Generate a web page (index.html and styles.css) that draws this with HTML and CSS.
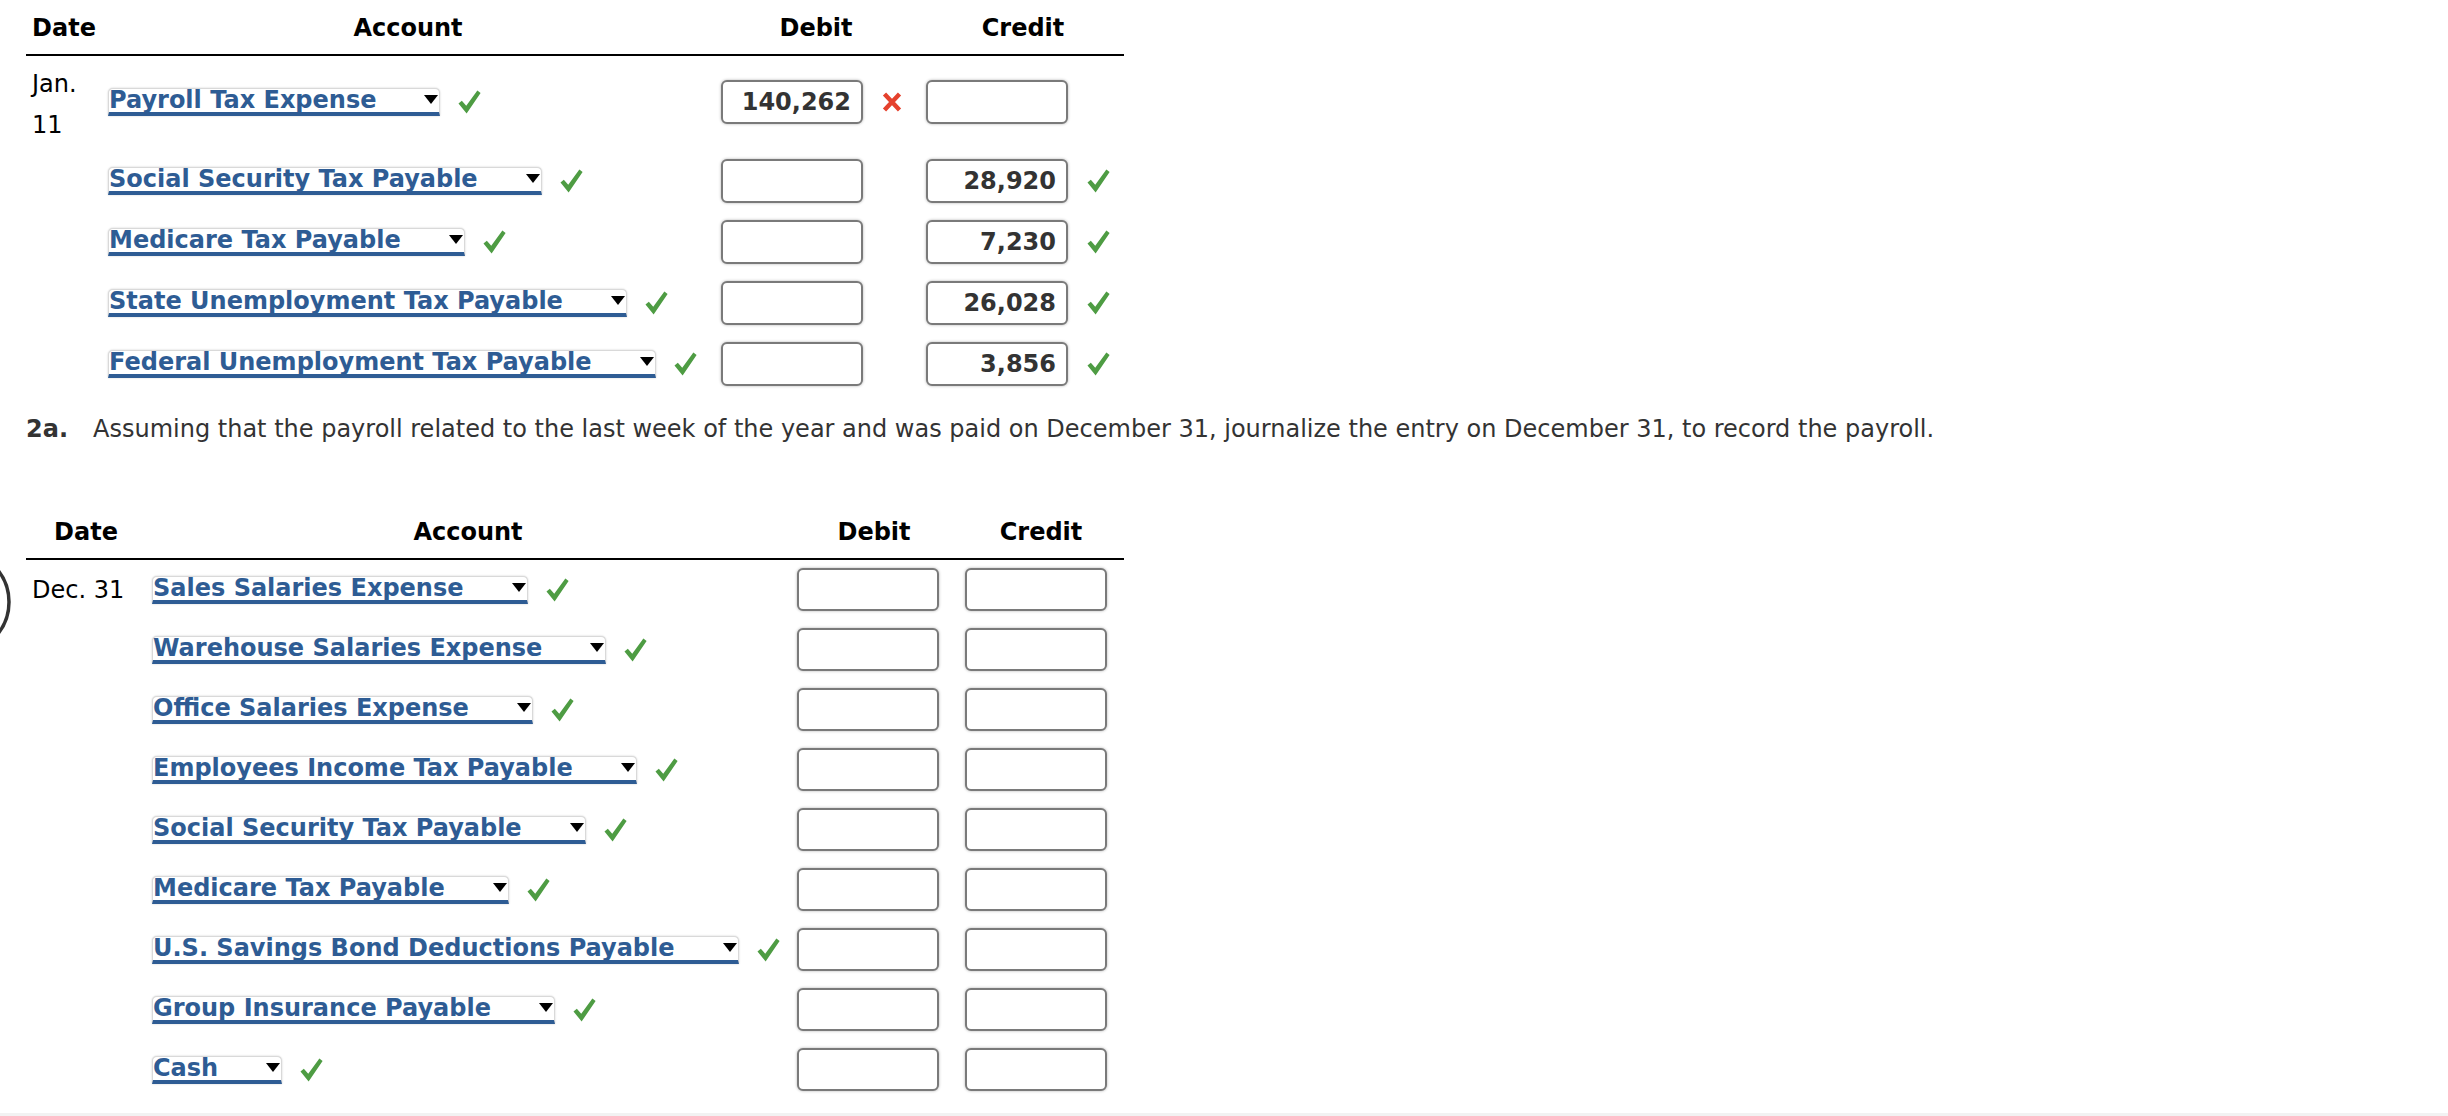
FILE: index.html
```html
<!DOCTYPE html>
<html lang="en">
<head>
<meta charset="utf-8">
<title>Journal entries</title>
<link rel="stylesheet" href="styles.css">
</head>
<body>
<div class="page">
  <svg class="edge-circle" width="12" height="66" viewBox="0 0 12 66" aria-hidden="true"><circle cx="-42" cy="33" r="51" fill="none" stroke="#333" stroke-width="3.5"/></svg>

  <section class="journal j1">
    <div class="jrow head">
      <div class="h-date">Date</div>
      <div class="h-acct">Account</div>
      <div class="h-debit">Debit</div>
      <div class="h-credit">Credit</div>
    </div>

    <div class="jrow first">
      <div class="c-date">Jan.<br>11</div>
      <div class="c-acct"><span class="dd"><span class="dd-text">Payroll Tax Expense</span><span class="arrow"></span></span><svg class="ok" viewBox="0 0 24 25"><path d="M0.5 14 L4 11.2 L8.6 16.4 L20.2 0.5 L23.6 3.2 L9 24.5 Z"/></svg></div>
      <div class="c-debit"><input class="amt" type="text" value="140,262" readonly><svg class="bad" viewBox="0 0 20 20"><path d="M2.5 2 L17.5 18 M17.5 2 L2.5 18"/></svg></div>
      <div class="c-credit"><input class="amt" type="text" value="" readonly></div>
    </div>

    <div class="jrow line">
      <div class="c-date"></div>
      <div class="c-acct"><span class="dd"><span class="dd-text">Social Security Tax Payable</span><span class="arrow"></span></span><svg class="ok" viewBox="0 0 24 25"><path d="M0.5 14 L4 11.2 L8.6 16.4 L20.2 0.5 L23.6 3.2 L9 24.5 Z"/></svg></div>
      <div class="c-debit"><input class="amt" type="text" value="" readonly></div>
      <div class="c-credit"><input class="amt" type="text" value="28,920" readonly><svg class="ok" viewBox="0 0 24 25"><path d="M0.5 14 L4 11.2 L8.6 16.4 L20.2 0.5 L23.6 3.2 L9 24.5 Z"/></svg></div>
    </div>

    <div class="jrow line">
      <div class="c-date"></div>
      <div class="c-acct"><span class="dd"><span class="dd-text">Medicare Tax Payable</span><span class="arrow"></span></span><svg class="ok" viewBox="0 0 24 25"><path d="M0.5 14 L4 11.2 L8.6 16.4 L20.2 0.5 L23.6 3.2 L9 24.5 Z"/></svg></div>
      <div class="c-debit"><input class="amt" type="text" value="" readonly></div>
      <div class="c-credit"><input class="amt" type="text" value="7,230" readonly><svg class="ok" viewBox="0 0 24 25"><path d="M0.5 14 L4 11.2 L8.6 16.4 L20.2 0.5 L23.6 3.2 L9 24.5 Z"/></svg></div>
    </div>

    <div class="jrow line">
      <div class="c-date"></div>
      <div class="c-acct"><span class="dd"><span class="dd-text">State Unemployment Tax Payable</span><span class="arrow"></span></span><svg class="ok" viewBox="0 0 24 25"><path d="M0.5 14 L4 11.2 L8.6 16.4 L20.2 0.5 L23.6 3.2 L9 24.5 Z"/></svg></div>
      <div class="c-debit"><input class="amt" type="text" value="" readonly></div>
      <div class="c-credit"><input class="amt" type="text" value="26,028" readonly><svg class="ok" viewBox="0 0 24 25"><path d="M0.5 14 L4 11.2 L8.6 16.4 L20.2 0.5 L23.6 3.2 L9 24.5 Z"/></svg></div>
    </div>

    <div class="jrow line">
      <div class="c-date"></div>
      <div class="c-acct"><span class="dd"><span class="dd-text">Federal Unemployment Tax Payable</span><span class="arrow"></span></span><svg class="ok" viewBox="0 0 24 25"><path d="M0.5 14 L4 11.2 L8.6 16.4 L20.2 0.5 L23.6 3.2 L9 24.5 Z"/></svg></div>
      <div class="c-debit"><input class="amt" type="text" value="" readonly></div>
      <div class="c-credit"><input class="amt" type="text" value="3,856" readonly><svg class="ok" viewBox="0 0 24 25"><path d="M0.5 14 L4 11.2 L8.6 16.4 L20.2 0.5 L23.6 3.2 L9 24.5 Z"/></svg></div>
    </div>
  </section>

  <p class="q"><b class="q-num">2a.</b><span>Assuming that the payroll related to the last week of the year and was paid on December 31, journalize the entry on December 31, to record the payroll.</span></p>

  <section class="journal j2">
    <div class="jrow head">
      <div class="h-date">Date</div>
      <div class="h-acct">Account</div>
      <div class="h-debit">Debit</div>
      <div class="h-credit">Credit</div>
    </div>

    <div class="jrow line firstline">
      <div class="c-date">Dec. 31</div>
      <div class="c-acct"><span class="dd"><span class="dd-text">Sales Salaries Expense</span><span class="arrow"></span></span><svg class="ok" viewBox="0 0 24 25"><path d="M0.5 14 L4 11.2 L8.6 16.4 L20.2 0.5 L23.6 3.2 L9 24.5 Z"/></svg></div>
      <div class="c-debit"><input class="amt" type="text" value="" readonly></div>
      <div class="c-credit"><input class="amt" type="text" value="" readonly></div>
    </div>

    <div class="jrow line">
      <div class="c-date"></div>
      <div class="c-acct"><span class="dd"><span class="dd-text">Warehouse Salaries Expense</span><span class="arrow"></span></span><svg class="ok" viewBox="0 0 24 25"><path d="M0.5 14 L4 11.2 L8.6 16.4 L20.2 0.5 L23.6 3.2 L9 24.5 Z"/></svg></div>
      <div class="c-debit"><input class="amt" type="text" value="" readonly></div>
      <div class="c-credit"><input class="amt" type="text" value="" readonly></div>
    </div>

    <div class="jrow line">
      <div class="c-date"></div>
      <div class="c-acct"><span class="dd"><span class="dd-text">Office Salaries Expense</span><span class="arrow"></span></span><svg class="ok" viewBox="0 0 24 25"><path d="M0.5 14 L4 11.2 L8.6 16.4 L20.2 0.5 L23.6 3.2 L9 24.5 Z"/></svg></div>
      <div class="c-debit"><input class="amt" type="text" value="" readonly></div>
      <div class="c-credit"><input class="amt" type="text" value="" readonly></div>
    </div>

    <div class="jrow line">
      <div class="c-date"></div>
      <div class="c-acct"><span class="dd"><span class="dd-text">Employees Income Tax Payable</span><span class="arrow"></span></span><svg class="ok" viewBox="0 0 24 25"><path d="M0.5 14 L4 11.2 L8.6 16.4 L20.2 0.5 L23.6 3.2 L9 24.5 Z"/></svg></div>
      <div class="c-debit"><input class="amt" type="text" value="" readonly></div>
      <div class="c-credit"><input class="amt" type="text" value="" readonly></div>
    </div>

    <div class="jrow line">
      <div class="c-date"></div>
      <div class="c-acct"><span class="dd"><span class="dd-text">Social Security Tax Payable</span><span class="arrow"></span></span><svg class="ok" viewBox="0 0 24 25"><path d="M0.5 14 L4 11.2 L8.6 16.4 L20.2 0.5 L23.6 3.2 L9 24.5 Z"/></svg></div>
      <div class="c-debit"><input class="amt" type="text" value="" readonly></div>
      <div class="c-credit"><input class="amt" type="text" value="" readonly></div>
    </div>

    <div class="jrow line">
      <div class="c-date"></div>
      <div class="c-acct"><span class="dd"><span class="dd-text">Medicare Tax Payable</span><span class="arrow"></span></span><svg class="ok" viewBox="0 0 24 25"><path d="M0.5 14 L4 11.2 L8.6 16.4 L20.2 0.5 L23.6 3.2 L9 24.5 Z"/></svg></div>
      <div class="c-debit"><input class="amt" type="text" value="" readonly></div>
      <div class="c-credit"><input class="amt" type="text" value="" readonly></div>
    </div>

    <div class="jrow line">
      <div class="c-date"></div>
      <div class="c-acct"><span class="dd"><span class="dd-text">U.S. Savings Bond Deductions Payable</span><span class="arrow"></span></span><svg class="ok" viewBox="0 0 24 25"><path d="M0.5 14 L4 11.2 L8.6 16.4 L20.2 0.5 L23.6 3.2 L9 24.5 Z"/></svg></div>
      <div class="c-debit"><input class="amt" type="text" value="" readonly></div>
      <div class="c-credit"><input class="amt" type="text" value="" readonly></div>
    </div>

    <div class="jrow line">
      <div class="c-date"></div>
      <div class="c-acct"><span class="dd"><span class="dd-text">Group Insurance Payable</span><span class="arrow"></span></span><svg class="ok" viewBox="0 0 24 25"><path d="M0.5 14 L4 11.2 L8.6 16.4 L20.2 0.5 L23.6 3.2 L9 24.5 Z"/></svg></div>
      <div class="c-debit"><input class="amt" type="text" value="" readonly></div>
      <div class="c-credit"><input class="amt" type="text" value="" readonly></div>
    </div>

    <div class="jrow line">
      <div class="c-date"></div>
      <div class="c-acct"><span class="dd"><span class="dd-text">Cash</span><span class="arrow"></span></span><svg class="ok" viewBox="0 0 24 25"><path d="M0.5 14 L4 11.2 L8.6 16.4 L20.2 0.5 L23.6 3.2 L9 24.5 Z"/></svg></div>
      <div class="c-debit"><input class="amt" type="text" value="" readonly></div>
      <div class="c-credit"><input class="amt" type="text" value="" readonly></div>
    </div>
  </section>
</div>
</body>
</html>
```

FILE: styles.css
```css
html, body {
  margin: 0;
  padding: 0;
  background: #fff;
}

body {
  font-family: "DejaVu Sans", Verdana, sans-serif;
  font-size: 24px;
  color: #000;
}

.page {
  position: relative;
  box-sizing: border-box;
  min-height: 1116px;
  padding: 0 0 0 26px;
  border-bottom: 3px solid #f2f2f2;
}

.edge-circle {
  position: absolute;
  left: 0;
  top: 569px;
}

.journal {
  width: 1098px;
}

.jrow {
  display: grid;
  align-items: center;
}

.j1 .jrow {
  grid-template-columns: 82px 613px 205px 198px;
}

.j2 .jrow {
  grid-template-columns: 126px 645px 168px 159px;
}

/* header */
.head {
  font-weight: bold;
  line-height: 28px;
  padding-bottom: 12px;
  border-bottom: 2px solid #000;
}

.head > div {
  text-align: center;
}

.j1 .head {
  padding-top: 14px;
}

.j1 .h-date { padding-right: 6px; }
.j1 .h-acct { padding-right: 13px; }
.j1 .h-debit { padding-right: 15px; }
.j1 .h-credit { padding-right: 4px; }

.j2 .h-date { padding-right: 6px; }
.j2 .h-acct { padding-right: 13px; }
.j2 .h-debit { padding-right: 14px; }
.j2 .h-credit { padding-right: 7px; }

/* rows */
.line {
  height: 44px;
  margin-top: 17px;
}

.j1 .first {
  align-items: start;
  margin-top: 8px;
}

.j1 .first + .line {
  margin-top: 13px;
}

.first .c-date {
  line-height: 41px;
}

.first .c-acct {
  padding-top: 24px;
}

.first .c-debit,
.first .c-credit {
  padding-top: 16px;
}

.j2 .line {
  height: 43px;
  margin-top: 17px;
}

.j2 .firstline {
  margin-top: 8px;
}

.c-date {
  padding-left: 6px;
  white-space: nowrap;
}

.c-acct,
.c-debit,
.c-credit {
  display: flex;
  align-items: center;
  gap: 19px;
}

.c-acct {
  gap: 18px;
}

/* dropdown */
.dd {
  display: inline-flex;
  align-items: flex-start;
  box-sizing: border-box;
  height: 28px;
  background: #fff;
  border: 1px solid #d9d9d9;
  border-bottom: 4px solid #2e5c94;
  border-radius: 5px 5px 0 0;
  box-shadow: 0 0 2px rgba(0, 0, 0, 0.22);
  color: #2e5c94;
  font-weight: bold;
  line-height: 23px;
  white-space: nowrap;
}

.dd .arrow {
  width: 0;
  height: 0;
  margin: 6px 1px 0 48px;
  border-left: 7px solid transparent;
  border-right: 7px solid transparent;
  border-top: 9px solid #000;
}

/* marks */
.ok {
  width: 23px;
  height: 24px;
  flex: none;
  fill: #4e9c43;
}

.bad {
  width: 20px;
  height: 20px;
  flex: none;
  fill: none;
  stroke: #e5412d;
  stroke-width: 4.4;
}

/* amount inputs */
.amt {
  box-sizing: border-box;
  width: 142px;
  height: 44px;
  margin: 0;
  padding: 0 10px;
  border: 2px solid #7a7a7a;
  border-radius: 6px;
  box-shadow: 0 0 3px rgba(0, 0, 0, 0.3);
  background: #fff;
  font-family: "DejaVu Sans", Verdana, sans-serif;
  font-size: 24px;
  font-weight: bold;
  color: #333;
  text-align: right;
  outline: none;
  flex: none;
}

.j2 .amt {
  height: 43px;
}

/* question */
.q {
  display: flex;
  margin: 29px 0 0;
  line-height: 28px;
  color: #333;
  white-space: nowrap;
}

.q-num {
  width: 67px;
  flex: none;
}

.j2 {
  margin-top: 75px;
}
```
